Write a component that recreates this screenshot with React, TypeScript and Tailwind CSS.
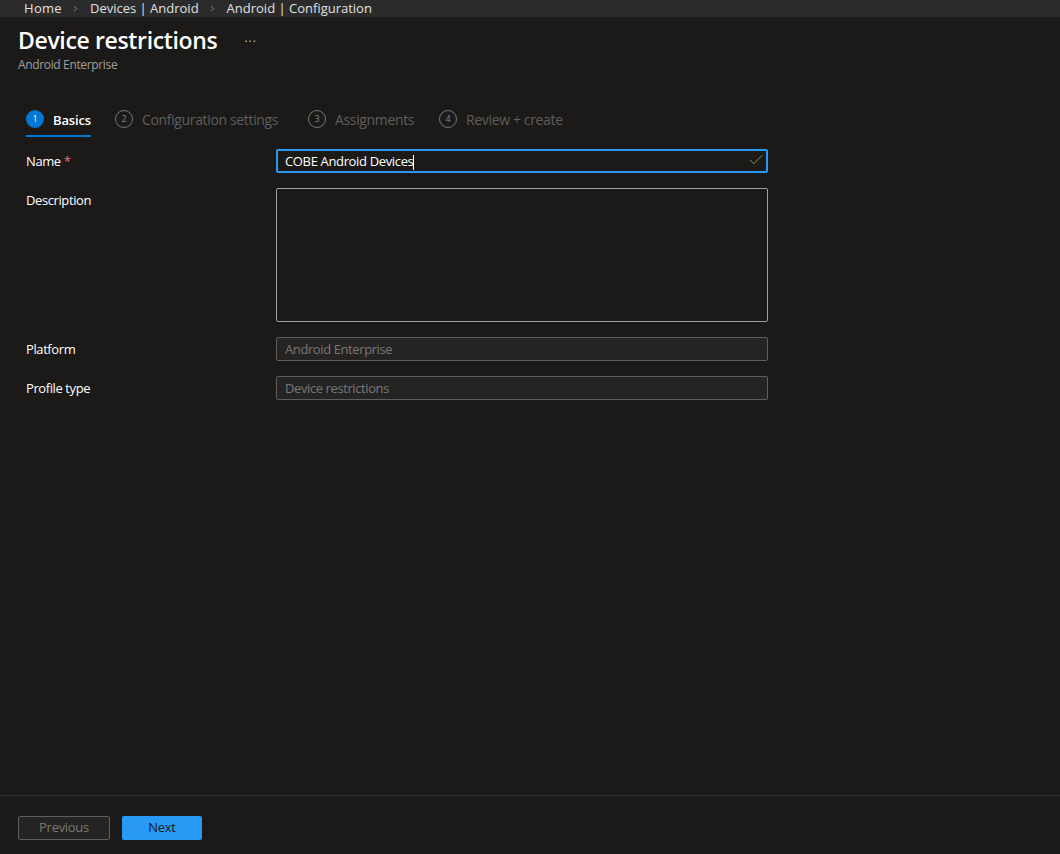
import { Check, ChevronRight } from 'lucide-react';

const font = "font-['Open_Sans','Noto_Sans',sans-serif]";

const steps = [
  { n: 2, label: 'Configuration settings', width: 'w-[193px]' },
  { n: 3, label: 'Assignments', width: 'w-[131px]' },
  { n: 4, label: 'Review + create', width: 'w-[130px]' },
];

function Row({ label, required, children }: { label: string; required?: boolean; children: React.ReactNode }) {
  return (
    <div className="flex items-start pl-[26px]">
      <div className="w-[250px] h-6 pt-[2px] flex items-center text-[13px] text-white tracking-[-0.4px]">
        {label}
        {required && <span className="ml-[3px] text-[#f1707b]">*</span>}
      </div>
      {children}
    </div>
  );
}

function ReadOnly({ value }: { value: string }) {
  return (
    <div className="w-[492px] h-6 pl-2 pt-[2px] flex items-center rounded-[2px] border border-[#605e5c] bg-[#252423] text-[13px] text-[#797775] tracking-[-0.4px]">
      {value}
    </div>
  );
}

export default function App() {
  return (
    <div className={`w-[1060px] h-[854px] bg-[#1b1a19] flex flex-col overflow-hidden ${font}`}>
      {/* Breadcrumb */}
      <div className="h-[17px] pl-6 flex items-center bg-[#2b2b2b] text-[13px] leading-[16px] text-[#e0e0e0] whitespace-nowrap">
        <span className="pb-px tracking-[0.3px]">Home</span>
        <ChevronRight size={9} className="mx-[9.5px] text-[#a0a0a0]" />
        <span className="pb-px">Devices | Android</span>
        <ChevronRight size={9} className="mx-[9.5px] text-[#a0a0a0]" />
        <span className="pb-px">Android | Configuration</span>
      </div>

      {/* Title */}
      <div className="pl-[18px] pt-[7px]">
        <div className="flex items-center h-8">
          <h1 className="text-[23px] leading-8 font-semibold text-white tracking-[-0.35px]">Device restrictions</h1>
          <span className="ml-[27px] text-[12px] leading-8 text-[#c8c6c4] tracking-[1px] -mt-1">...</span>
        </div>
        <p className="text-[12px] leading-4 text-[#a19f9d] tracking-[-0.35px] mt-[1px]">Android Enterprise</p>
      </div>

      {/* Steps */}
      <div className="flex pl-[26px] mt-[29px] h-[35px]">
        <div className="w-[89px] h-[35px] flex items-start">
          <div className="h-[35px] border-b-2 border-[#0078d4] flex items-start pt-[8px] w-[65px]">
            <span className="w-[18px] h-[18px] rounded-full bg-[#0078d4] flex items-center justify-center text-[9px] text-white shrink-0">1</span>
            <span className="ml-[9px] text-[13px] leading-[20px] font-semibold text-white tracking-[-0.15px]">Basics</span>
          </div>
        </div>
        {steps.map((s) => (
          <div key={s.n} className={`${s.width} flex items-start pt-[8px]`}>
            <span className="w-[18px] h-[18px] rounded-full border border-[#797775] flex items-center justify-center text-[9px] text-[#8a8886] shrink-0">
              {s.n}
            </span>
            <span className="ml-[9px] text-[14px] leading-[20px] text-[#5f5e5c] tracking-[-0.35px] whitespace-nowrap">{s.label}</span>
          </div>
        ))}
      </div>

      {/* Form */}
      <div className="flex flex-col mt-[12px]">
        <Row label="Name" required>
          <div className="relative w-[492px] h-6 pl-2 pt-[2px] flex items-center rounded-[2px] border-2 border-[#2899f5] text-[13px] text-white tracking-[-0.35px]">
            <span className="-ml-px">COBE Android Devices</span>
            <span className="w-px h-[15px] bg-white" />
            <Check size={18} strokeWidth={1.25} className="absolute right-px top-0 text-[#7fa650]" />
          </div>
        </Row>
        <div className="mt-[15px]">
          <Row label="Description">
            <div className="w-[492px] h-[134px] rounded-[2px] border border-[#a19f9d]" />
          </Row>
        </div>
        <div className="mt-[15px]">
          <Row label="Platform">
            <ReadOnly value="Android Enterprise" />
          </Row>
        </div>
        <div className="mt-[15px]">
          <Row label="Profile type">
            <ReadOnly value="Device restrictions" />
          </Row>
        </div>
      </div>

      {/* Footer */}
      <div className="mt-auto h-[59px] border-t border-[#323130] pl-[18px] pt-[20px] flex gap-3 items-start">
        <button type="button" className="w-[92px] h-6 rounded-[2px] border border-[#605e5c] bg-[#252423] text-[13px] font-medium text-[#797775] tracking-[-0.3px]">
          Previous
        </button>
        <button type="button" className="w-20 h-6 rounded-[2px] bg-[#2899f5] text-[13px] font-medium text-[#1b1a19] tracking-[-0.3px]">
          Next
        </button>
      </div>
    </div>
  );
}
